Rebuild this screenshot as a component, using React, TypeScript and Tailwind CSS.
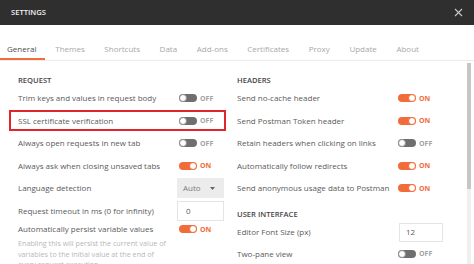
import React from "react";

const Toggle = ({ on }: { on: boolean }) => (
  <div className="flex items-center gap-[3px] pl-[2px]">
    <div
      className={`flex h-[8px] w-[18px] rounded-full ${
        on ? "justify-end bg-[#f26b3a]" : "justify-start bg-[#6f6f6f]"
      }`}
    >
      <div
        className={`h-[8px] w-[8px] rounded-full border bg-white ${
          on ? "border-[#f26b3a]" : "border-[#8c8c8c]"
        }`}
      />
    </div>
    <span
      className={`text-[7px] font-bold leading-none ${
        on ? "text-[#f26b3a]" : "text-[#a3a3a3]"
      }`}
    >
      {on ? "ON" : "OFF"}
    </span>
  </div>
);

const Row = ({
  label,
  children,
  h = "h-[22.5px]",
}: {
  label: string;
  children?: React.ReactNode;
  h?: string;
}) => (
  <div className={`flex items-center ${h}`}>
    <div className="flex-1 text-[8px] leading-none text-[#5a5a5a]">{label}</div>
    <div className="w-[47px]">{children}</div>
  </div>
);

const Heading = ({ text, extra = "" }: { text: string; extra?: string }) => (
  <div
    className={`flex h-[13px] items-center text-[7.6px] font-semibold leading-none text-[#454545] ${extra}`}
  >
    {text}
  </div>
);

const tabs = [
  "Themes",
  "Shortcuts",
  "Data",
  "Add-ons",
  "Certificates",
  "Proxy",
  "Update",
  "About",
];

export default function App() {
  return (
    <div className="flex h-[264px] w-[474px] flex-col overflow-hidden bg-white font-['Open_Sans',sans-serif]">
      {/* title bar */}
      <div className="flex h-[25px] shrink-0 items-center justify-between bg-[#2f2f2f] pl-[11px] pr-[11px]">
        <span className="text-[7.6px] font-semibold text-[#f2f2f2]">SETTINGS</span>
        <svg width="9" height="9" viewBox="0 0 9 9">
          <path d="M1 1L8 8M8 1L1 8" stroke="#c9c9c9" strokeWidth="1.1" />
        </svg>
      </div>

      {/* tabs */}
      <div className="flex h-[36px] shrink-0 items-end border-b border-[#ececec]">
        <div className="border-b-2 border-[#f26b3a] pb-[3px] pl-[7px] pr-[9px] text-[8px] leading-[12px] text-[#4d4d4d]">
          General
        </div>
        {tabs.map((t) => (
          <div
            key={t}
            className="border-b-2 border-transparent px-[9.8px] pb-[3px] text-[8px] leading-[12px] text-[#a8a8a8]"
          >
            {t}
          </div>
        ))}
      </div>

      {/* content */}
      <div className="flex flex-1">
        <div className="flex gap-[13px] pl-[18px] pt-[13px]">
          <div className="flex w-[206px] flex-col">
            <Heading text="REQUEST" />
            <Row label="Trim keys and values in request body">
              <Toggle on={false} />
            </Row>
            <div className="relative">
              <Row label="SSL certificate verification">
                <Toggle on={false} />
              </Row>
              <div className="absolute -left-[9px] -right-[2px] top-[0.5px] bottom-[1px] border-2 border-[#e0262c]" />
            </div>
            <Row label="Always open requests in new tab">
              <Toggle on={false} />
            </Row>
            <Row label="Always ask when closing unsaved tabs">
              <Toggle on />
            </Row>
            <Row label="Language detection">
              <div className="flex h-[20px] items-center justify-between bg-[#ececec] pl-[6px] pr-[9px]">
                <span className="text-[8px] text-[#7a7a7a]">Auto</span>
                <svg width="5" height="3" viewBox="0 0 5 3">
                  <path d="M0 0H5L2.5 3Z" fill="#666" />
                </svg>
              </div>
            </Row>
            <Row label="Request timeout in ms (0 for infinity)">
              <div className="flex h-[20px] items-center border border-[#e4e4e4] pl-[8px] text-[8px] text-[#5a5a5a]">
                0
              </div>
            </Row>
            <Row label="Automatically persist variable values" h="h-[14px]">
              <Toggle on />
            </Row>
            <div className="mt-[2px] w-[153px] text-[7.2px] leading-[10.5px] text-[#b8b8b8]">
              Enabling this will persist the current value of variables to the initial value at the end of
              every request execution.
            </div>
          </div>

          <div className="flex w-[206px] flex-col">
            <Heading text="HEADERS" />
            <Row label="Send no-cache header">
              <Toggle on />
            </Row>
            <Row label="Send Postman Token header">
              <Toggle on />
            </Row>
            <Row label="Retain headers when clicking on links">
              <Toggle on={false} />
            </Row>
            <Row label="Automatically follow redirects">
              <Toggle on />
            </Row>
            <Row label="Send anonymous usage data to Postman">
              <Toggle on />
            </Row>
            <Heading text="USER INTERFACE" extra="mt-[8.5px]" />
            <Row label="Editor Font Size (px)" h="h-[22px]">
              <div className="ml-[3px] flex h-[19px] items-center border border-[#e4e4e4] pl-[6px] text-[8px] text-[#5a5a5a]">
                12
              </div>
            </Row>
            <Row label="Two-pane view" h="h-[21px]">
              <Toggle on={false} />
            </Row>
          </div>
        </div>

        {/* scrollbar */}
        <div className="ml-auto mr-[3px] mt-[2px] flex w-[4px] flex-col bg-[#efefef]">
          <div className="h-[126px] bg-[#c6c6c6]" />
        </div>
      </div>
    </div>
  );
}
